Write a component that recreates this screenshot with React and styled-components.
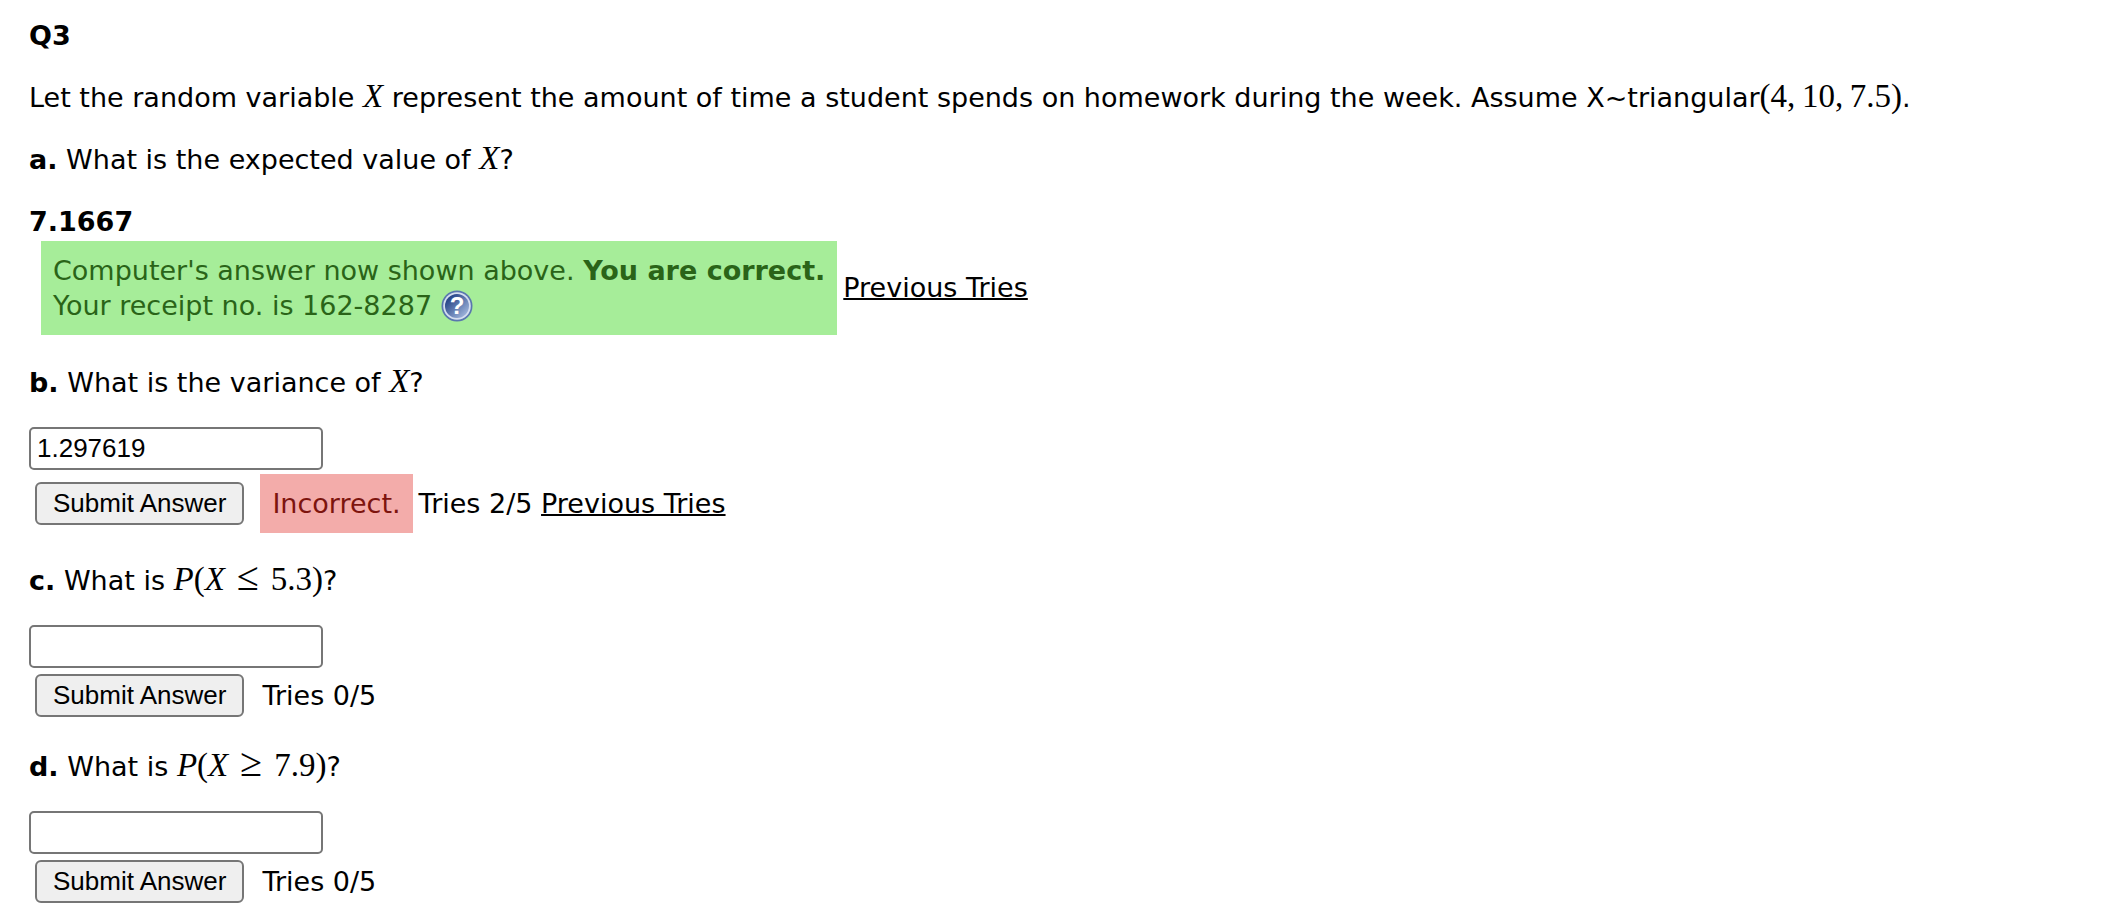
import React from 'react'
import styled, { createGlobalStyle } from 'styled-components'

const HelpIcon = () => (
  <Help viewBox='0 0 32 32' role='img' aria-label='Help'>
    <defs>
      <linearGradient id='helpFill' x1='0' y1='0' x2='1' y2='1'>
        <stop offset='0.2' stopColor='#2c4a8c' />
        <stop offset='0.9' stopColor='#a3b8de' />
      </linearGradient>
    </defs>
    <circle cx='16' cy='16' r='15.5' fill='#5977ae' />
    <circle cx='16' cy='16' r='13.8' fill='#d5def0' />
    <circle cx='16' cy='16' r='12' fill='url(#helpFill)' />
    <text x='16' y='24' textAnchor='middle'>
      ?
    </text>
  </Help>
)

const Problem = ({ id, text, math, answer, tries, incorrect }) => (
  <Section>
    <Line as='label' htmlFor={`answer-${id}`}>
      <b>{id}.</b> {text}
      <Formula>{math}</Formula>?
    </Line>
    <Answer id={`answer-${id}`} type='text' defaultValue={answer} />
    <Status>
      <Submit type='button'>Submit Answer</Submit>
      {incorrect ? (
        <>
          <Feedback>Incorrect.</Feedback>
          <span>
            {tries} <Tries href='#tries'>Previous Tries</Tries>
          </span>
        </>
      ) : (
        <Count>{tries}</Count>
      )}
    </Status>
  </Section>
)

const App = () => (
  <Page>
    <GlobalStyle />
    <Line>
      <b>Q3</b>
    </Line>
    <Line>
      Let the random variable{' '}
      <Formula>
        <i>X</i>
      </Formula>{' '}
      represent the amount of time a student spends on homework during the
      week. Assume X~triangular
      <Formula>(4,&thinsp;10,&thinsp;7.5)</Formula>.
    </Line>
    <Line>
      <b>a.</b> What is the expected value of{' '}
      <Formula>
        <i>X</i>
      </Formula>
      ?
    </Line>
    <Result>7.1667</Result>
    <Graded>
      <Feedback $correct>
        Computer's answer now shown above. <b>You are correct.</b>
        <Receipt>
          Your receipt no. is 162-8287 <HelpIcon />
        </Receipt>
      </Feedback>
      <Tries href='#tries'>Previous Tries</Tries>
    </Graded>
    {problems.map(problem => (
      <Problem key={problem.id} {...problem} />
    ))}
  </Page>
)

const GlobalStyle = createGlobalStyle`
  body {
    margin: 0;
    background: #fff;
  }
`

const Page = styled.main`
  padding: 18px 29px 7px;
  color: #000;
  font-family: Verdana, 'DejaVu Sans', sans-serif;
  font-size: 27px;
  line-height: 36px;
`

const Line = styled.p`
  display: block;
  margin: 0 0 26px;
`

const Formula = styled.span`
  font-family: 'Liberation Serif', serif;
  font-size: 33px;
  line-height: 0;
`

const Relation = styled.span`
  margin: 0 12px;
  font-size: 40px;
`

const Result = styled.div`
  font-weight: bold;
`

const Graded = styled.div`
  display: flex;
  align-items: center;
  gap: 6px;
  margin: 1px 0 0 12px;
`

const Feedback = styled.div`
  padding: 12px;
  line-height: 35px;
  color: ${props => (props.$correct ? '#2a6418' : '#7d140e')};
  background: ${props => (props.$correct ? '#a6ed99' : '#f3acaa')};
`

const Receipt = styled.div`
  display: flex;
  align-items: center;
  gap: 9px;
`

const Help = styled.svg`
  width: 32px;
  height: 32px;

  text {
    fill: #fff;
    font-family: 'Liberation Sans', sans-serif;
    font-size: 24px;
    font-weight: bold;
  }
`

const Section = styled.section`
  margin-top: 30px;
`

const Answer = styled.input`
  display: block;
  box-sizing: border-box;
  width: 294px;
  height: 43px;
  padding: 0 6px;
  border: 2px solid #767676;
  border-radius: 5px;
  background: #fff;
  font-family: 'Liberation Sans', Arial, sans-serif;
  font-size: 26px;
`

const Status = styled.div`
  display: flex;
  align-items: center;
  gap: 6px;
  min-height: 47px;
  margin: 4px 0 0 6px;
`

const Submit = styled.button`
  height: 43px;
  margin-right: 10px;
  padding: 0 16px;
  border: 2px solid #767676;
  border-radius: 6px;
  background: #efefef;
  color: #000;
  font-family: 'Liberation Sans', Arial, sans-serif;
  font-size: 26px;
`

const Count = styled.span`
  margin-left: 2px;
`

const Tries = styled.a`
  color: inherit;
  text-decoration: underline;
  text-decoration-thickness: 2px;
`

const problems = [
  {
    id: 'b',
    text: 'What is the variance of ',
    math: <i>X</i>,
    answer: '1.297619',
    tries: 'Tries 2/5',
    incorrect: true,
  },
  {
    id: 'c',
    text: 'What is ',
    math: (
      <>
        <i>P</i>(<i>X</i>
        <Relation>≤</Relation>5.3)
      </>
    ),
    answer: '',
    tries: 'Tries 0/5',
  },
  {
    id: 'd',
    text: 'What is ',
    math: (
      <>
        <i>P</i>(<i>X</i>
        <Relation>≥</Relation>7.9)
      </>
    ),
    answer: '',
    tries: 'Tries 0/5',
  },
]

export default App
